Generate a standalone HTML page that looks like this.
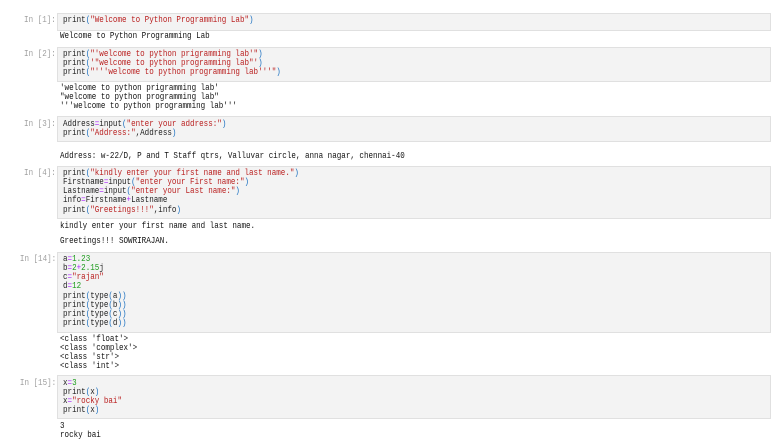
<!DOCTYPE html>
<html><head><meta charset="utf-8"><style>
body{margin:0;width:784px;height:441px;background:#fff;overflow:hidden;font-family:"Liberation Mono",monospace;font-size:9px;}
.p{position:absolute;right:728px;text-align:right;color:#a0a0a0;line-height:9.15px;white-space:pre;transform:scaleX(0.84);transform-origin:right top;}
.b{position:absolute;left:57px;width:712px;background:#f3f3f3;border:1px solid #e0e0e0;}
.t{position:absolute;left:63px;line-height:9.15px;white-space:pre;color:#222;transform:scaleX(0.84);transform-origin:left top;}
.o{position:absolute;left:60px;line-height:9.15px;white-space:pre;color:#111;transform:scaleX(0.84);transform-origin:left top;}
.s{color:#ba2121}.k{color:#1a6fc0}.n{color:#1a9a1a}.op{color:#aa22ff}
</style></head><body>
<div class="b" style="top:13px;height:16px"></div>
<div class="p" style="top:16px">In [1]:</div>
<div class="t" style="top:16px">print<span class="k">(</span><span class="s">"Welcome to Python Programming Lab"</span><span class="k">)</span></div>
<div class="o" style="top:32px">Welcome to Python Programming Lab</div>

<div class="b" style="top:47px;height:33px"></div>
<div class="p" style="top:50px">In [2]:</div>
<div class="t" style="top:50px">print<span class="k">(</span><span class="s">"'welcome to python prigramming lab'"</span><span class="k">)</span>
print<span class="k">(</span><span class="s">'"welcome to python programming lab"'</span><span class="k">)</span>
print<span class="k">(</span><span class="s">"'''welcome to python programming lab'''"</span><span class="k">)</span></div>
<div class="o" style="top:84px">'welcome to python prigramming lab'
"welcome to python programming lab"
'''welcome to python programming lab'''</div>

<div class="b" style="top:116px;height:24px"></div>
<div class="p" style="top:120px">In [3]:</div>
<div class="t" style="top:120px">Address<span class="op">=</span>input<span class="k">(</span><span class="s">"enter your address:"</span><span class="k">)</span>
print<span class="k">(</span><span class="s">"Address:"</span>,Address<span class="k">)</span></div>
<div class="o" style="top:152px">Address: w-22/D, P and T Staff qtrs, Valluvar circle, anna nagar, chennai-40</div>

<div class="b" style="top:166px;height:51px"></div>
<div class="p" style="top:169px">In [4]:</div>
<div class="t" style="top:169px">print<span class="k">(</span><span class="s">"kindly enter your first name and last name."</span><span class="k">)</span>
Firstname<span class="op">=</span>input<span class="k">(</span><span class="s">"enter your First name:"</span><span class="k">)</span>
Lastname<span class="op">=</span>input<span class="k">(</span><span class="s">"enter your Last name:"</span><span class="k">)</span>
info<span class="op">=</span>Firstname<span class="op">+</span>Lastname
print<span class="k">(</span><span class="s">"Greetings!!!"</span>,info<span class="k">)</span></div>
<div class="o" style="top:222px">kindly enter your first name and last name.</div>
<div class="o" style="top:237px">Greetings!!! SOWRIRAJAN.</div>

<div class="b" style="top:252px;height:79px"></div>
<div class="p" style="top:255px">In [14]:</div>
<div class="t" style="top:255px">a<span class="op">=</span><span class="n">1.23</span>
b<span class="op">=</span><span class="n">2</span><span class="op">+</span><span class="n">2.15</span>j
c<span class="op">=</span><span class="s">"rajan"</span>
d<span class="op">=</span><span class="n">12</span>
print<span class="k">(</span>type<span class="k">(</span>a<span class="k">))</span>
print<span class="k">(</span>type<span class="k">(</span>b<span class="k">))</span>
print<span class="k">(</span>type<span class="k">(</span>c<span class="k">))</span>
print<span class="k">(</span>type<span class="k">(</span>d<span class="k">))</span></div>
<div class="o" style="top:335px">&lt;class 'float'&gt;
&lt;class 'complex'&gt;
&lt;class 'str'&gt;
&lt;class 'int'&gt;</div>

<div class="b" style="top:375px;height:42px"></div>
<div class="p" style="top:379px">In [15]:</div>
<div class="t" style="top:379px">x<span class="op">=</span><span class="n">3</span>
print<span class="k">(</span>x<span class="k">)</span>
x<span class="op">=</span><span class="s">"rocky bai"</span>
print<span class="k">(</span>x<span class="k">)</span></div>
<div class="o" style="top:422px">3
rocky bai</div>
</body></html>
